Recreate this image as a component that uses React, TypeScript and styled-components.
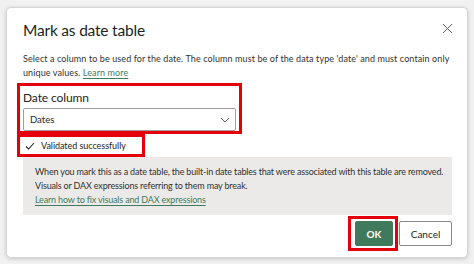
import styled, { createGlobalStyle } from "styled-components";

const GlobalStyle = createGlobalStyle`
	html, body {
		margin: 0;
		padding: 0;
		background: #f1f1f1;
		font-family: "Lato", "Liberation Sans", sans-serif;
	}
	* {
		box-sizing: border-box;
	}
`;

const Page = styled.div`
	width: 474px;
	height: 264px;
	padding: 7px 6px 6px 6px;
`;

const Dialog = styled.div`
	width: 462px;
	height: 251px;
	background: #ffffff;
	border: 1px solid #d6d6d6;
	border-radius: 5px;
	box-shadow: 0 1px 4px rgba(0, 0, 0, 0.18);
	padding: 10px 15px 0 16px;
	display: flex;
	flex-direction: column;
	color: #252423;
`;

const Header = styled.div`
	display: flex;
	justify-content: space-between;
	align-items: center;
	height: 23px;
`;

const Title = styled.div`
	font-size: 15.5px;
	letter-spacing: -0.2px;
	color: #201f1e;
`;

const CloseButton = styled.div`
	width: 14px;
	height: 14px;
	display: flex;
	align-items: center;
	justify-content: center;
	margin-right: -2px;
	margin-top: -2px;
`;

const BodyText = styled.div<{ $spacing: number }>`
	font-size: 9px;
	letter-spacing: ${(p) => p.$spacing}px;
	line-height: 14px;
	color: #323130;
	white-space: nowrap;
`;

const Description = styled(BodyText)`
	margin-top: 11px;
`;

const Link = styled.span`
	color: #3e7a5c;
	text-decoration: underline;
	text-underline-offset: 2px;
`;

const Highlight = styled.div<{ $width?: number }>`
	margin-left: -6px;
	border: 3px solid #e3000b;
	padding: 3px 3px 0 3px;
	width: ${(p) => (p.$width ? `${p.$width}px` : "auto")};
`;

const FieldBox = styled(Highlight)`
	margin-top: 3px;
	height: 51px;
`;

const Label = styled.div`
	font-size: 12px;
	letter-spacing: -0.1px;
	line-height: 17px;
	color: #252423;
`;

const Select = styled.div`
	margin-top: 2px;
	height: 23px;
	border: 1px solid #a19f9d;
	border-radius: 2px;
	display: flex;
	align-items: center;
	justify-content: space-between;
	padding: 0 5px 0 6px;
	font-size: 9.5px;
`;

const ValidBox = styled(Highlight)`
	height: 23px;
	padding: 0 0 0 5px;
	display: flex;
	align-items: center;
	gap: 6px;
	font-size: 9px;
	letter-spacing: -0.05px;
	white-space: nowrap;
	color: #252423;
`;

const Notice = styled(BodyText)`
	background: #ebeae9;
	padding: 8px 12px 8px 12px;
`;

const Footer = styled.div`
	display: flex;
	justify-content: flex-end;
	align-items: center;
	gap: 1px;
	margin-top: 1px;
`;

const OkFrame = styled.div`
	border: 3px solid #e3000b;
	padding: 2px 2px 2px 4px;
`;

const Button = styled.div<{ $primary?: boolean }>`
	height: 25px;
	display: flex;
	align-items: center;
	justify-content: center;
	border-radius: 2px;
	font-size: 10px;
	font-weight: ${(p) => (p.$primary ? 700 : 400)};
	width: ${(p) => (p.$primary ? "38px" : "53px")};
	background: ${(p) => (p.$primary ? "#3f7a5d" : "#ffffff")};
	color: ${(p) => (p.$primary ? "#ffffff" : "#252423")};
	border: 1px solid ${(p) => (p.$primary ? "#3f7a5d" : "#8a8886")};
`;

const App = () => {
	return (
		<>
			<GlobalStyle />
			<Page>
				<Dialog>
					<Header>
						<Title>Mark as date table</Title>
						<CloseButton>
							<svg width="11" height="11" viewBox="0 0 11 11">
								<path d="M1 1 L10 10 M10 1 L1 10" stroke="#605e5c" strokeWidth="1" />
							</svg>
						</CloseButton>
					</Header>
					<Description $spacing={0.1}>
						Select a column to be used for the date. The column must be of the data type 'date' and must contain only
						<br />
						unique values. <Link>Learn more</Link>
					</Description>
					<FieldBox $width={225}>
						<Label>Date column</Label>
						<Select>
							<span>Dates</span>
							<svg width="10" height="6" viewBox="0 0 10 6">
								<path d="M1 1 L5 5 L9 1" stroke="#605e5c" strokeWidth="1" fill="none" />
							</svg>
						</Select>
					</FieldBox>
					<ValidBox $width={128}>
						<svg width="10" height="8" viewBox="0 0 10 8">
							<path d="M1 4.5 L3.6 7 L9 1" stroke="#252423" strokeWidth="1.1" fill="none" />
						</svg>
						<span>Validated successfully</span>
					</ValidBox>
					<Notice $spacing={-0.17}>
						When you mark this as a date table, the built-in date tables that were associated with this table are removed.
						<br />
						Visuals or DAX expressions referring to them may break.
						<br />
						<Link>Learn how to fix visuals and DAX expressions</Link>
					</Notice>
					<Footer>
						<OkFrame>
							<Button $primary>OK</Button>
						</OkFrame>
						<Button>Cancel</Button>
					</Footer>
				</Dialog>
			</Page>
		</>
	);
};

export default App;
